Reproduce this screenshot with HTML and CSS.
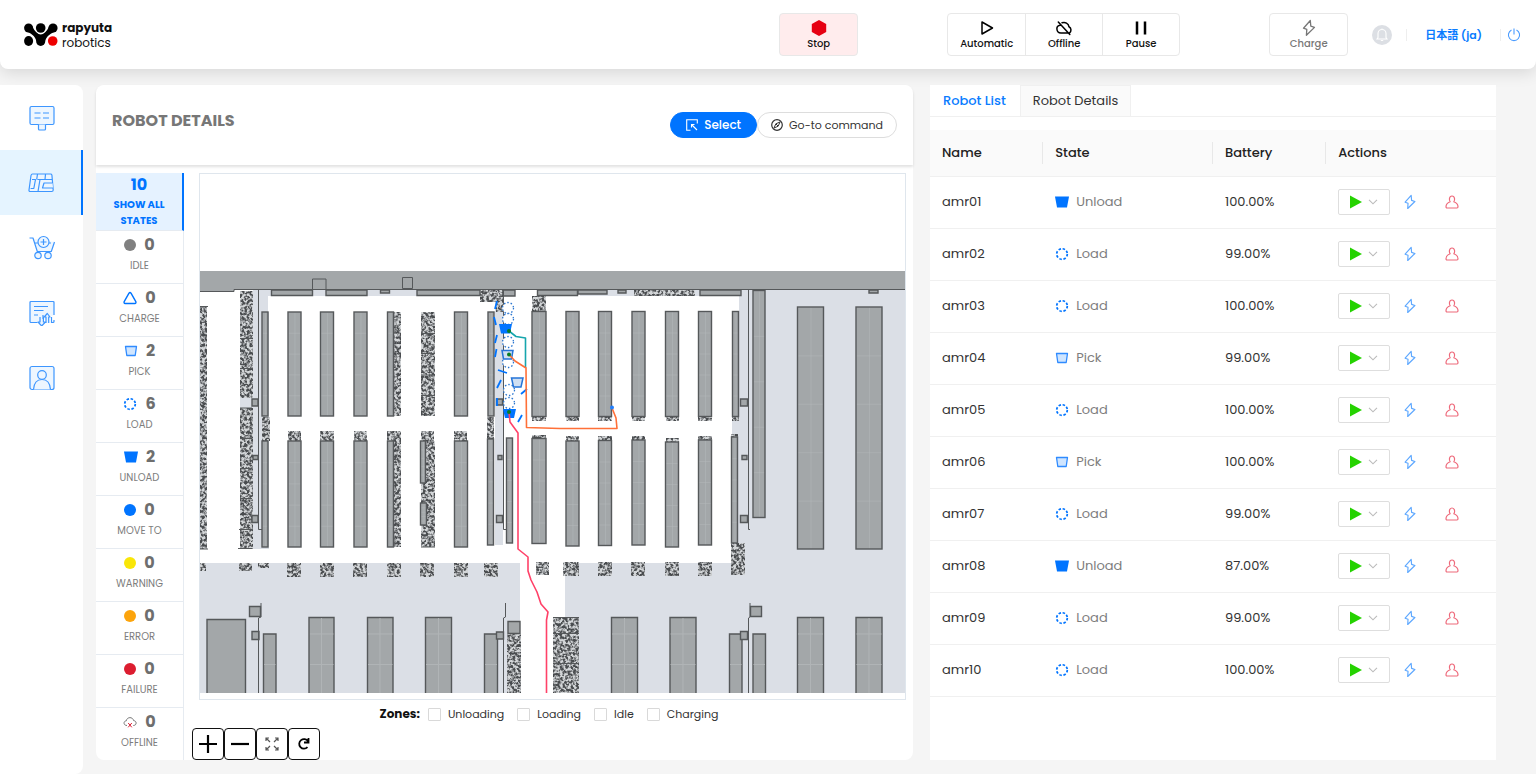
FILE: index.html
```html
<!DOCTYPE html>
<html lang="en">
<head>
<meta charset="utf-8">
<meta name="viewport" content="width=device-width, initial-scale=1">
<title>Rapyuta Robotics – Robot Details</title>
<link rel="stylesheet" href="styles.css">
</head>
<body>
<svg class="sprite" aria-hidden="true">
  <symbol id="i-bucket" viewBox="0 0 14 12"><path d="M1.500 1.500h11L11.200 10.500H2.800z" fill="#cfe5ff" stroke="#2f8bff" stroke-width="1.300" stroke-linejoin="round"/></symbol>
  <symbol id="i-bucket-full" viewBox="0 0 14 12"><path d="M0 .5h14l-2 11H2z" fill="#0074ff"/></symbol>
  <symbol id="i-load" viewBox="0 0 14 14"><circle cx="7" cy="7" r="5.300" fill="none" stroke="#0074ff" stroke-width="1.700" stroke-dasharray="2.500 1.660"/></symbol>
  <symbol id="i-triangle" viewBox="0 0 14 14"><path d="M6 2.200 1.200 10.600q-.6 1.700 1 1.900h9.600q1.600-.2 1-1.900L8 2.200q-1-1.300-2 0z" fill="none" stroke="#0074ff" stroke-width="1.400" stroke-linejoin="round"/></symbol>
  <symbol id="i-bolt" viewBox="0 0 14 18"><path d="M8.300 1.500 1.500 9.200l3.300 1.200L4.400 16.300 12.500 8.400 8.800 7.200z" fill="none" stroke="currentColor" stroke-width="1.300" stroke-linejoin="round"/></symbol>
  <symbol id="i-user" viewBox="0 0 14 14"><path d="M5.200 6.800C4 5.500 3.900 1 7 1s3 4.500 1.800 5.800C11 7.600 13 9.300 13 11.800q0 1.200-1 1.200H2q-1 0-1-1.200C1 9.300 3 7.600 5.200 6.800z" fill="none" stroke="currentColor" stroke-width="1.200" stroke-linejoin="round"/></symbol>
  <symbol id="i-play" viewBox="0 0 12 14"><path d="M0 .5 12 7 0 13.500z" fill="#25d200"/></symbol>
  <symbol id="i-chevron" viewBox="0 0 10 6"><path d="m1 .8 4 4 4-4" fill="none" stroke="#bbb" stroke-width="1.100"/></symbol>
</svg>

<header class="topbar">
  <a class="brand" href="#" aria-label="Rapyuta Robotics home">
    <svg class="brand-mark" viewBox="0 0 34 24" aria-hidden="true">
      <path d="M8 3Q16.700 20 25.500 3L30 9Q23 12 21 18H12.500Q10.500 12 4 9z"/>
      <ellipse cx="4.600" cy="5" rx="4.500" ry="4.600"/><ellipse cx="29" cy="5" rx="4.600" ry="4.600"/>
      <circle cx="16.700" cy="5" r="5.800" fill="#fff"/><circle cx="16.700" cy="5" r="4.800"/>
      <ellipse cx="4.600" cy="18" rx="4.500" ry="4.900"/><ellipse cx="16.700" cy="18" rx="4.600" ry="5"/>
      <circle cx="28.700" cy="18" r="5.800" fill="#fff"/><circle cx="28.700" cy="18" r="4.800" fill="#ee0000"/>
    </svg>
    <span class="brand-text"><strong>rapyuta</strong><span>robotics</span></span>
  </a>
  <button class="tool tool-stop" type="button">
    <svg class="tool-icon" viewBox="0 0 18 18"><path d="m9 1 7.200 4v8L9 17l-7.200-4V5z" fill="#e60012"/></svg>Stop
  </button>
  <div class="tool-group">
    <button class="tool" type="button"><svg class="tool-icon" viewBox="0 0 18 18"><path d="M4 3 14.500 9 4 15z" fill="none" stroke="#000" stroke-width="1.500" stroke-linejoin="round"/></svg>Automatic</button>
    <button class="tool" type="button"><svg class="tool-icon" viewBox="0 0 18 18"><path d="M5.500 6.200C2.500 6.300 1.700 8.200 1.900 10c.2 2.400 1.900 4 4 4h8M7 3.800c3-1.200 6.600.5 7 4 2.600 1.200 2.400 4.700.6 6M3.300 3l11.500 12.500" fill="none" stroke="#000" stroke-width="1.500" stroke-linecap="round"/></svg>Offline</button>
    <button class="tool" type="button"><svg class="tool-icon" viewBox="0 0 18 18"><path d="M5 2.500v13M13 2.500v13" stroke="#000" stroke-width="2.500"/></svg>Pause</button>
  </div>
  <button class="tool tool-charge" type="button"><svg class="tool-icon"><use href="#i-bolt"/></svg>Charge</button>
  <button class="bell" type="button" aria-label="Notifications"><svg viewBox="0 0 20 20"><path d="M5 14h10l-1-1.500V8.500a4 4 0 0 0-8 0v4zM8.800 15.500h2.400M10 3.500v1" fill="none" stroke="#fff" stroke-width="1.100"/></svg></button>
  <a class="lang" href="#">日本語 (ja)</a>
  <button class="power" type="button" aria-label="Log out"><svg viewBox="0 0 14 14"><path d="M4.500 2a5.600 5.600 0 1 0 5 0M7 .5v6" fill="none" stroke="#4b9cff" stroke-width="1.100"/></svg></button>
</header>

<div class="shell">
  <nav class="sidebar" aria-label="Main">
    <a class="nav-item" href="#" aria-label="Dashboard"><svg viewBox="0 0 26 26"><rect x="1" y="1.500" width="24" height="18" rx="1.500"/><path d="M5.500 8h6M14 8h6M5.500 13h6M14 13h6M9.500 19.500V24q0 1 1 1h5q1 0 1-1v-4.500"/></svg></a>
    <a class="nav-item nav-active" href="#" aria-label="Robot map"><svg viewBox="0 0 26 26"><path d="M4.500 4h18q1.200 0 1.400 1l1.300 15q0 1.500-1.500 1.500H2.300Q.8 21.500 1 20L3 5.500Q3.300 4 4.500 4z"/><path d="M4 9.500H7.500L5.800 18.500H2.600M9.500 9.500H24M12 9.500 10 21.500M9.500 4 8.700 9.500M17.500 4 17 9.500M24.500 13H16L14.500 18H25"/></svg></a>
    <a class="nav-item" href="#" aria-label="Orders"><svg viewBox="0 0 26 26"><path d="M.5 3H4l4.300 13.500h14L25.500 7M5.500 8h3.300M19.500 8H22"/><circle cx="14.500" cy="7" r="5.500"/><path d="M14.500 4v6M11.500 7h6"/><circle cx="9" cy="20.500" r="3.200"/><circle cx="19" cy="20.500" r="3.200"/></svg></a>
    <a class="nav-item" href="#" aria-label="Task log"><svg viewBox="0 0 26 26"><path d="M25 15V2.500q0-1-1-1H2q-1 0-1 1v19q0 1 1 1h6.500M5 6.500h14M5 10.500h9.500M5 15h4M25 20v1.500q0 1-1 1h-2"/><path d="M11 17v5H9l3.700 4 3.700-4h-2v-5M17 23v-6h-1.800l3.100-3.500L21 17h-1.300v6M14 15v4M22.500 23v-6"/></svg></a>
    <a class="nav-item" href="#" aria-label="Account"><svg viewBox="0 0 26 26"><rect x="1" y="1.500" width="24" height="23" rx="2"/><circle cx="13" cy="10" r="4.300"/><path d="M4.500 24.500C5 17.500 8.500 14.500 13 14.500s8 3 8.500 10"/></svg></a>
  </nav>

  <main class="map-panel">
    <div class="panel-head">
      <h1>ROBOT DETAILS</h1>
      <div class="modes">
        <button class="mode mode-on" type="button"><svg viewBox="0 0 12 12"><path d="M4.500 11.300H.7V.7h10.600v3.800M5.500 5.500l5.500 5.500M5.500 8.500v-3h3" fill="none" stroke="currentColor" stroke-width="1.100"/></svg>Select</button>
        <button class="mode" type="button"><svg viewBox="0 0 12 12"><circle cx="6" cy="6" r="5.300" fill="none" stroke="currentColor" stroke-width="1.200"/><path d="M9 3 7.200 7.200 3 9l1.800-4.200zM5 5l2 2" fill="none" stroke="currentColor"/></svg>Go-to command</button>
      </div>
    </div>
    <div class="panel-body">
      <div class="states">
        <button class="state state-all" type="button"><b>10</b><span>SHOW ALL STATES</span></button>
        <button class="state" type="button"><span class="count"><i class="dot idle"></i><b>0</b></span><span>IDLE</span></button>
        <button class="state" type="button"><span class="count"><svg><use href="#i-triangle"/></svg><b>0</b></span><span>CHARGE</span></button>
        <button class="state" type="button"><span class="count"><svg><use href="#i-bucket"/></svg><b>2</b></span><span>PICK</span></button>
        <button class="state" type="button"><span class="count"><svg><use href="#i-load"/></svg><b>6</b></span><span>LOAD</span></button>
        <button class="state" type="button"><span class="count"><svg><use href="#i-bucket-full"/></svg><b>2</b></span><span>UNLOAD</span></button>
        <button class="state" type="button"><span class="count"><i class="dot move"></i><b>0</b></span><span>MOVE TO</span></button>
        <button class="state" type="button"><span class="count"><i class="dot warning"></i><b>0</b></span><span>WARNING</span></button>
        <button class="state" type="button"><span class="count"><i class="dot error"></i><b>0</b></span><span>ERROR</span></button>
        <button class="state" type="button"><span class="count"><i class="dot failure"></i><b>0</b></span><span>FAILURE</span></button>
        <button class="state" type="button"><span class="count"><svg viewBox="0 0 14 12"><path d="M4 9.500C.2 9.500.2 5 3.300 4.800 4 .6 9.800.6 10.600 4.600 14 4.800 14 9.500 10.300 9.500" fill="none" stroke="#777"/><path d="m5.200 7 3.600 4.300M8.800 7l-3.600 4.300" stroke="#dc2036"/></svg><b>0</b></span><span>OFFLINE</span></button>
      </div>

      <div class="map-area">
        <svg class="map" viewBox="200 174 705 525" role="img" aria-label="Warehouse map">
          <defs>
            <pattern id="shelf" patternUnits="objectBoundingBox" width="0.5" height="0.2">
              <rect width="100" height="100" fill="#a3a7a9"/><path d="M0 0H100M0 0V100" stroke="#b3b8ba" stroke-width="1"/>
            </pattern>
            <filter id="speckle" x="0" y="0" width="1" height="1" color-interpolation-filters="sRGB">
              <feTurbulence type="fractalNoise" baseFrequency="0.38" numOctaves="2" seed="7"/>
              <feColorMatrix values="4 0 0 0 -1.5  4 0 0 0 -1.5  4 0 0 0 -1.5  0 0 0 0 1"/>
              <feComponentTransfer><feFuncR type="linear" slope=".54" intercept=".29"/><feFuncG type="linear" slope=".54" intercept=".3"/><feFuncB type="linear" slope=".54" intercept=".31"/></feComponentTransfer>
              <feComposite in2="SourceAlpha" operator="in"/>
            </filter>
          </defs>

          <g class="floor">
            <path d="M200 563H520V693H200zM565 563H905V693H553V617H565zM739 290H905V564H739zM732 420H740V564H732z"/>
            <path d="M253 290H268V312H261V549H253zM261 312H269V549H253V540H261zM240 398H254V408H240zM268 290H480V296H268zM580 290H741V296H580zM495 290H503V545H495z"/>
          </g>
          <path class="wall" d="M200 271H905V290H234V291H200z"/>
          <path class="line" d="M200 291.500H234V289.500H905M312.500 289V279H326V289M402.500 277.500H412.500V288.500H402.500z"/>

          <g filter="url(#speckle)">
            <path d="M200 306h7v243h-7zM240 291h13v107h-13zM240 408h13v141h-13zM262 417h8v24h-8zM487 417h7v22h-7zM480 290h23v12h-23zM496 302h7v10h-7zM532 296h14v15h-14zM634 290h61v6h-61z"/>
            <path d="M393 312h8v104h-8zM421 312h14v104h-14zM393 441h8v106h-8zM421 441h14v106h-14z"/>
            <path d="M288 431h13v10h-13zM320 431h14v10h-14zM354 431h13v10h-13zM387 431h14v10h-14zM421 431h13v10h-13zM454 431h13v10h-13z"/>
            <path d="M532 417h14v4h-14zM566 417h13v4h-13zM598 417h14v4h-14zM632 417h13v4h-13zM666 417h13v4h-13zM698 417h14v4h-14zM732 417h7v4h-7zM532 435h14v4h-14zM566 436h13v5h-13zM598 436h14v5h-14zM632 436h13v4h-13zM666 438h13v4h-13zM698 436h14v5h-14zM731 434h7v4h-7z"/>
            <path d="M200 563h6v8h-6zM239 563h13v8h-13zM258 563h11v5h-11zM287 563h14v14h-14zM320 563h14v14h-14zM353 563h14v14h-14zM387 563h14v14h-14zM420 563h14v14h-14zM454 563h14v14h-14zM484 563h14v14h-14zM536 562h13v13h-13zM563 562h16v14h-16zM598 562h14v14h-14zM631 562h14v14h-14zM665 562h14v14h-14zM698 562h14v14h-14zM731 543h14v32h-14z"/>
            <path d="M507 634h14v59h-14zM553 617h26v76h-26z"/>
          </g>

          <g class="rack">
            <path d="M271.500 290h41v5.500h-41zM326 290h41v5.500h-41zM380.500 290h9v3h-9zM417 290h63v5.500h-63zM503 290h12v6h-12zM537.500 290h40v5.500h-40zM578 290h29v4h-29zM618 290h8v3h-8zM700 290h41v5.500h-41zM869 290h9v3h-9z"/>
            <rect x="262" y="312" width="6" height="104"/><rect x="288" y="312" width="13" height="104"/><rect x="320.500" y="312" width="13" height="104"/><rect x="354" y="312" width="13" height="104"/><rect x="387.500" y="312" width="6" height="104"/><rect x="454.500" y="312" width="13" height="104"/><rect x="488" y="312" width="6" height="104"/>
            <rect x="262" y="441" width="6" height="106"/><rect x="288" y="441" width="13" height="106"/><rect x="320.500" y="441" width="13" height="106"/><rect x="354" y="441" width="13" height="106"/><rect x="387.500" y="441" width="6" height="106"/><rect x="420.500" y="441" width="5" height="42"/><rect x="420.500" y="503" width="6" height="22"/><rect x="454.500" y="441" width="13" height="106"/><rect x="487.500" y="439" width="6" height="106"/><rect x="506.500" y="438" width="6" height="105"/>
            <rect x="532" y="311.500" width="14" height="105"/><rect x="566" y="311.500" width="13" height="105"/><rect x="598.500" y="311.500" width="13" height="105"/><rect x="632" y="311.500" width="13" height="105"/><rect x="665.500" y="311.500" width="13" height="105"/><rect x="698.500" y="311.500" width="13" height="105"/><rect x="732.500" y="311.500" width="6" height="105"/>
            <rect x="532" y="438.500" width="14" height="105"/><rect x="566" y="441" width="13" height="105"/><rect x="598.500" y="440.500" width="13" height="105"/><rect x="632" y="440" width="13" height="105"/><rect x="665.500" y="442" width="13" height="105"/><rect x="698.500" y="440" width="13" height="105"/><rect x="731.500" y="437" width="6" height="106"/>
            <rect x="753" y="290.500" width="12" height="227"/><rect x="797.500" y="307" width="26" height="242"/><rect x="856" y="307" width="26" height="242"/>
            <path d="M207 693V619.500H245.500V693"/>
            <path d="M263.500 693V634H276V693M309 693V617.500H334V693M367.500 693V617.500H393V693M425.500 693V617.500H451.500V693M484.500 693V634H497.500V693M611.500 693V617.500H637.500V693M670 693V617.500H696V693M729.500 693V634H742V693M753 693V634H765.500V693M797.500 693V617.500H823.500V693M856 693V617.500H882V693"/>
            <path class="seam" d="M264 664.500H275.500M310 634H333.500M310 664.500H333.500M321.500 618V693M368 634H392.500M368 664.500H392.500M380 618V693M426 634H451M426 664.500H451M438.500 618V693M485 664.500H497M612 634H637M612 664.500H637M624.500 618V693M670.500 634H695.500M670.500 664.500H695.500M683 618V693M730 664.500H741.500M753.500 664.500H765M798 634H823M798 664.500H823M810.500 618V693M856.500 634H881.500M856.500 664.500H881.500M869 618V693"/>
            <path d="M249.500 606.500h11v10h-11zM252 631.500h7v8h-7zM508 621.500h12v12h-12zM496.500 632h7v7h-7zM750.500 606.500h11v10h-11zM740.500 631.500h7v8h-7z"/>
            <path d="M252 399h6v7h-6zM253 455.500h5v4h-5zM252 515.500h6v7h-6zM496.500 399h6v6h-6zM498 455.500h4v4h-4zM496.500 515.500h6v7h-6zM740.500 399h7v7h-7zM742 455.500h5v4h-5zM740.500 515.500h7v7h-7z"/>
          </g>
          <path class="line" d="M258.500 290V529.500H262M503.500 290V529.500H507M748.500 290V529.500H750M261 603V617L258.500 618V693M505.500 603V617L503.500 618V693M750 603V617L748.500 618V693M239 529.500H252M238 548.500H252M200 549H208M200 306.500H208M240 338.500H252M240 368.500H252M240 408H252M240 438.500H252M240 468.500H252M240 498.500H252M421 333.500H435M421 353.500H435M421 375H435M421 395.500H435M553 633.500H579M553 663.500H579M553 617.500H579M421 547H435"/>

          <g class="waiting"><circle cx="508" cy="308" r="5.500"/><circle cx="508" cy="319" r="5.500"/><circle cx="508" cy="342" r="5.500"/><circle cx="508" cy="362" r="5.500"/><circle cx="509" cy="390" r="5.500"/><circle cx="509" cy="403" r="5.500"/></g>
          <path class="heading" d="M497 301 495 309M494 317 496 325M497 335 495 343M496.500 349 495 357M498 370 507 373M501 380 497 388M497 398V406M521 394 527 389M522 415 518 422"/>
          <path d="M499 324H512L510 333.500H501zM503 409H516L514 418H505z" fill="#0074ff"/>
          <path d="M502 350.500H513L511.500 359H503.500zM511.500 378H523L521 387H513.500z" fill="#cfdff2" stroke="#2574d8" stroke-width="1.500"/>
          <g class="route">
            <path d="M509 331 516 336.500 525.500 338V368" stroke="#16a6ad"/>
            <path d="M509 354.500 515 361 526 368 526.500 427.500 560 428.500H617L616 418 612 408" stroke="#ff7038"/>
            <path d="M509 412 510 422 518 433V549L528 557V571L531 580 537 592 541 604 548 612 546.500 620V693" stroke="#ff4168"/>
          </g>
          <g fill="#087c24"><circle cx="509" cy="331" r="2"/><circle cx="509" cy="354.500" r="2"/><circle cx="509" cy="412" r="2"/></g>
          <circle cx="612" cy="407.500" r="2" fill="#2080ff"/>
        </svg>

        <div class="zones">
          <strong>Zones:</strong>
          <label><input type="checkbox">Unloading</label>
          <label><input type="checkbox">Loading</label>
          <label><input type="checkbox">Idle</label>
          <label><input type="checkbox">Charging</label>
        </div>
        <div class="map-tools">
          <button type="button" aria-label="Zoom in"><svg viewBox="0 0 20 20"><path d="M10 1v18M1 10h18" stroke-width="2.200"/></svg></button>
          <button type="button" aria-label="Zoom out"><svg viewBox="0 0 20 20"><path d="M1 10h18" stroke-width="2.200"/></svg></button>
          <button type="button" aria-label="Fit"><svg viewBox="0 0 20 20"><path class="fit" d="m8 8-4-4m0 3V4h3m5 4 4-4m-3 0h3v3m-8 5-4 4m0-3v3h3m5-4 4 4m-3 0h3v-3"/></svg></button>
          <button type="button" aria-label="Reload"><svg viewBox="0 0 20 20"><path d="M13.500 13.200A4.800 4.800 0 1 1 14 7.200M14.500 4v4.500H10" stroke-width="1.800"/></svg></button>
        </div>
      </div>
    </div>
  </main>

  <section class="list-panel">
    <div class="tabs" role="tablist">
      <button class="tab tab-on" type="button" role="tab" aria-selected="true">Robot List</button>
      <button class="tab" type="button" role="tab" aria-selected="false">Robot Details</button>
    </div>
    <table class="robots">
      <thead><tr><th scope="col">Name</th><th scope="col">State</th><th scope="col">Battery</th><th scope="col">Actions</th></tr></thead>
      <tbody>
        <tr><td>amr01</td><td><span class="status"><svg><use href="#i-bucket-full"/></svg>Unload</span></td><td>100.00%</td><td><div class="actions"><button class="run" type="button" aria-label="Run amr01"><svg class="play"><use href="#i-play"/></svg><svg class="chev"><use href="#i-chevron"/></svg></button><button class="act bolt" type="button" aria-label="Charge amr01"><svg><use href="#i-bolt"/></svg></button><button class="act user" type="button" aria-label="Assist amr01"><svg><use href="#i-user"/></svg></button></div></td></tr>
        <tr><td>amr02</td><td><span class="status"><svg><use href="#i-load"/></svg>Load</span></td><td>99.00%</td><td><div class="actions"><button class="run" type="button" aria-label="Run amr02"><svg class="play"><use href="#i-play"/></svg><svg class="chev"><use href="#i-chevron"/></svg></button><button class="act bolt" type="button" aria-label="Charge amr02"><svg><use href="#i-bolt"/></svg></button><button class="act user" type="button" aria-label="Assist amr02"><svg><use href="#i-user"/></svg></button></div></td></tr>
        <tr><td>amr03</td><td><span class="status"><svg><use href="#i-load"/></svg>Load</span></td><td>100.00%</td><td><div class="actions"><button class="run" type="button" aria-label="Run amr03"><svg class="play"><use href="#i-play"/></svg><svg class="chev"><use href="#i-chevron"/></svg></button><button class="act bolt" type="button" aria-label="Charge amr03"><svg><use href="#i-bolt"/></svg></button><button class="act user" type="button" aria-label="Assist amr03"><svg><use href="#i-user"/></svg></button></div></td></tr>
        <tr><td>amr04</td><td><span class="status"><svg><use href="#i-bucket"/></svg>Pick</span></td><td>99.00%</td><td><div class="actions"><button class="run" type="button" aria-label="Run amr04"><svg class="play"><use href="#i-play"/></svg><svg class="chev"><use href="#i-chevron"/></svg></button><button class="act bolt" type="button" aria-label="Charge amr04"><svg><use href="#i-bolt"/></svg></button><button class="act user" type="button" aria-label="Assist amr04"><svg><use href="#i-user"/></svg></button></div></td></tr>
        <tr><td>amr05</td><td><span class="status"><svg><use href="#i-load"/></svg>Load</span></td><td>100.00%</td><td><div class="actions"><button class="run" type="button" aria-label="Run amr05"><svg class="play"><use href="#i-play"/></svg><svg class="chev"><use href="#i-chevron"/></svg></button><button class="act bolt" type="button" aria-label="Charge amr05"><svg><use href="#i-bolt"/></svg></button><button class="act user" type="button" aria-label="Assist amr05"><svg><use href="#i-user"/></svg></button></div></td></tr>
        <tr><td>amr06</td><td><span class="status"><svg><use href="#i-bucket"/></svg>Pick</span></td><td>100.00%</td><td><div class="actions"><button class="run" type="button" aria-label="Run amr06"><svg class="play"><use href="#i-play"/></svg><svg class="chev"><use href="#i-chevron"/></svg></button><button class="act bolt" type="button" aria-label="Charge amr06"><svg><use href="#i-bolt"/></svg></button><button class="act user" type="button" aria-label="Assist amr06"><svg><use href="#i-user"/></svg></button></div></td></tr>
        <tr><td>amr07</td><td><span class="status"><svg><use href="#i-load"/></svg>Load</span></td><td>99.00%</td><td><div class="actions"><button class="run" type="button" aria-label="Run amr07"><svg class="play"><use href="#i-play"/></svg><svg class="chev"><use href="#i-chevron"/></svg></button><button class="act bolt" type="button" aria-label="Charge amr07"><svg><use href="#i-bolt"/></svg></button><button class="act user" type="button" aria-label="Assist amr07"><svg><use href="#i-user"/></svg></button></div></td></tr>
        <tr><td>amr08</td><td><span class="status"><svg><use href="#i-bucket-full"/></svg>Unload</span></td><td>87.00%</td><td><div class="actions"><button class="run" type="button" aria-label="Run amr08"><svg class="play"><use href="#i-play"/></svg><svg class="chev"><use href="#i-chevron"/></svg></button><button class="act bolt" type="button" aria-label="Charge amr08"><svg><use href="#i-bolt"/></svg></button><button class="act user" type="button" aria-label="Assist amr08"><svg><use href="#i-user"/></svg></button></div></td></tr>
        <tr><td>amr09</td><td><span class="status"><svg><use href="#i-load"/></svg>Load</span></td><td>99.00%</td><td><div class="actions"><button class="run" type="button" aria-label="Run amr09"><svg class="play"><use href="#i-play"/></svg><svg class="chev"><use href="#i-chevron"/></svg></button><button class="act bolt" type="button" aria-label="Charge amr09"><svg><use href="#i-bolt"/></svg></button><button class="act user" type="button" aria-label="Assist amr09"><svg><use href="#i-user"/></svg></button></div></td></tr>
        <tr><td>amr10</td><td><span class="status"><svg><use href="#i-load"/></svg>Load</span></td><td>100.00%</td><td><div class="actions"><button class="run" type="button" aria-label="Run amr10"><svg class="play"><use href="#i-play"/></svg><svg class="chev"><use href="#i-chevron"/></svg></button><button class="act bolt" type="button" aria-label="Charge amr10"><svg><use href="#i-bolt"/></svg></button><button class="act user" type="button" aria-label="Assist amr10"><svg><use href="#i-user"/></svg></button></div></td></tr>
      </tbody>
    </table>
  </section>
</div>
</body>
</html>
```
FILE: styles.css
```css
* { box-sizing: border-box; }

body {
  margin: 0;
  min-height: 100vh;
  display: flex;
  flex-direction: column;
  gap: 16px;
  background: #f5f5f5;
  color: #333;
  font: 13px/20px Poppins, Inter, "Noto Sans CJK JP", sans-serif;
}

button {
  margin: 0;
  padding: 0;
  border: 0;
  background: none;
  color: inherit;
  font: inherit;
  cursor: pointer;
}

a { color: inherit; text-decoration: none; }
svg { display: block; flex: none; }
.sprite { display: none; }

/* Top bar */
.topbar {
  display: flex;
  align-items: center;
  height: 69px;
  padding: 0 15px 0 24px;
  background: #fff;
  border-radius: 0 0 8px 8px;
  box-shadow: 0 4px 16px rgba(0, 0, 0, .12);
}
.brand { display: flex; align-items: center; gap: 4px; margin-right: auto; }
.brand-mark { width: 34px; height: 24px; }
.brand-text { display: flex; flex-direction: column; color: #111; font-size: 12px; line-height: 15px; }
.tool {
  display: flex;
  flex-direction: column;
  align-items: center;
  justify-content: center;
  width: 77px;
  height: 41px;
  color: #111;
  font-size: 10px;
  font-weight: 500;
  line-height: 14px;
}
.tool-icon { width: 18px; height: 18px; }
.tool-stop, .tool-charge { width: 79px; height: 43px; border: 1px solid #e8e8e8; border-radius: 4px; }
.tool-stop { background: #ffeced; margin-right: 89px; }
.tool-charge { color: #777; }
.tool-group { display: flex; margin-right: 89px; border: 1px solid #e8e8e8; border-radius: 4px; }
.tool-group .tool + .tool { border-left: 1px solid #e8e8e8; }
.bell { width: 20px; height: 20px; margin: 0 14px 0 24px; border-radius: 50%; background: #dcdfe4; }
.lang {
  padding: 0 18px;
  border: solid #eee;
  border-width: 0 1px;
  color: #0a7cff;
  font-size: 11px;
  font-weight: 600;
  line-height: 12px;
}
.power { width: 14px; height: 14px; margin-left: 6px; }

/* Page frame */
.shell { flex: 1; display: flex; align-items: stretch; padding-right: 40px; }
.sidebar { flex: none; width: 83px; margin-right: 13px; background: #fff; border-radius: 0 8px 8px 0; }
.nav-item { display: flex; align-items: center; justify-content: center; height: 65px; }
.nav-item svg { width: 26px; height: 26px; fill: #edf6ff; stroke: #3d96ff; stroke-width: 1.2; stroke-linejoin: round; }
.nav-active { background: #e5f4ff; border-right: 2px solid #0074ff; }

/* Map panel */
.map-panel {
  flex: 817 1 0;
  min-width: 0;
  display: flex;
  flex-direction: column;
  margin: 0 17px 14px 0;
  background: #fff;
  border-radius: 8px;
}
.panel-head {
  display: flex;
  align-items: center;
  justify-content: space-between;
  height: 80px;
  padding: 0 16px;
  border-radius: 8px 8px 0 0;
  box-shadow: 0 2px 3px rgba(0, 0, 0, .12);
}
h1 { margin: 0 0 8px; color: #777; font-size: 16px; line-height: 24px; font-weight: 700; }
.modes { display: flex; }
.mode {
  display: flex;
  align-items: center;
  gap: 6px;
  height: 26px;
  padding: 0 13px;
  border: 1px solid #ddd;
  border-radius: 13px;
  font-size: 11px;
}
.mode svg { width: 12px; height: 12px; }
.mode-on { padding: 0 15px; border-color: #0074ff; background: #0074ff; color: #fff; font-size: 12px; font-weight: 500; }

.panel-body { flex: 1; display: flex; padding-top: 8px; }
.states { flex: none; width: 88px; display: flex; flex-direction: column; }
.state {
  flex: 1;
  display: flex;
  flex-direction: column;
  align-items: center;
  justify-content: center;
  gap: 3px;
  padding-bottom: 6px;
  border: solid #e6ebf1;
  border-width: 0 1px 1px 0;
  color: #7d7d7d;
  font-size: 10px;
  line-height: 16px;
}
.state:last-child { border-bottom: 0; }
.state b { color: #6e6e6e; font-size: 16px; font-weight: 700; line-height: 20px; }
.state svg { width: 14px; height: 14px; }
.count { display: flex; align-items: center; gap: 8px; }
.dot { width: 12px; height: 12px; border-radius: 50%; }
.idle { background: #808080; }
.move { background: #0074ff; }
.warning { background: #f9e608; }
.error { background: #fca40c; }
.failure { background: #dc1d30; }
.state-all {
  flex: none;
  gap: 2px;
  height: 58px;
  padding: 0 12px;
  border-right: 2px solid #0074ff;
  background: #e5f2ff;
  color: #0074ff;
  font-weight: 700;
}
.state-all b { color: inherit; }

.map-area { flex: 1; min-width: 0; display: flex; flex-direction: column; padding: 0 7px 0 8px; }
.map { width: auto; margin-left: 7px; border: 1px solid #dfe6ed; }
.floor { fill: #dbdfe6; }
.wall { fill: #a3a7a9; }
.line { fill: none; stroke: #55585a; stroke-width: 1; }
.rack { fill: #a3a7a9; stroke: #55585a; stroke-width: 1.4; }
.rack rect { fill: url(#shelf); }
.rack .seam { fill: none; stroke: #b0b4b6; stroke-width: 1; }
.waiting { fill: #fff; stroke: #2874cf; stroke-width: 1.3; stroke-dasharray: 1.5 2; }
.heading { stroke: #0074ff; stroke-width: 1.8; }
.route { fill: none; stroke-width: 1.6; stroke-linejoin: round; }

.zones { display: flex; align-items: center; justify-content: center; gap: 13px; height: 28px; font-size: 11px; }
.zones strong { margin-right: -5px; color: #111; font-size: 12px; }
.zones label { display: flex; align-items: center; gap: 7px; }
.zones input { appearance: none; width: 13px; height: 13px; margin: 0; border: 1px solid #d9d9d9; border-radius: 1px; background: #fff; }
.map-tools { display: flex; margin-top: auto; }
.map-tools button { display: grid; place-items: center; width: 32px; height: 32px; border: 1px solid #111; border-radius: 4px; }
.map-tools svg { width: 20px; height: 20px; fill: none; stroke: #000; }
.map-tools .fit { stroke: #555; stroke-width: 1.2; }

/* Robot list */
.list-panel { flex: 566 1 0; min-width: 0; margin-bottom: 14px; background: #fff; }
.tabs { display: flex; gap: 1px; margin-bottom: 13px; border-bottom: 1px solid #f0f0f0; }
.tab { height: 31px; padding: 0 12px; border: 1px solid #f0f0f0; border-bottom: 0; background: #fafafa; }
.tab-on { border-color: #fff; background: #fff; color: #0a7cff; font-weight: 500; }
.robots { width: 100%; table-layout: fixed; border-collapse: collapse; }
.robots th, .robots td { padding: 0 12px; border-bottom: 1px solid #f0f0f0; text-align: left; }
.robots th {
  height: 46px;
  background: linear-gradient(#e8e8e8, #e8e8e8) right center / 1px 22px no-repeat #fafafa;
  color: #222;
  font-weight: 500;
}
.robots th:last-child { background: #fafafa; }
.robots td { height: 52px; }
.robots th:nth-child(odd) { width: 20%; }
.robots th:nth-child(even) { width: 30%; }
.status { display: flex; align-items: center; gap: 7px; color: #7d7d7d; }
.status svg { width: 14px; height: 14px; }
.actions { display: flex; align-items: center; }
.run { display: flex; align-items: center; justify-content: center; gap: 6px; width: 52px; height: 26px; border: 1px solid #dedede; border-radius: 2px; }
.play { width: 12px; height: 14px; }
.chev { width: 10px; height: 6px; }
.act svg { width: 14px; height: 16px; }
.bolt { margin: 0 28px 0 13px; color: #5ea8ff; }
.user { color: #ee6a7b; }
```
